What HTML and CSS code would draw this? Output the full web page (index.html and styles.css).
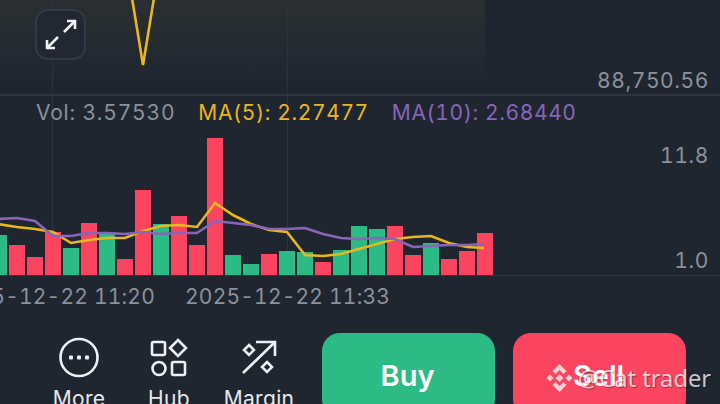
FILE: index.html
```html
<!DOCTYPE html>
<html lang="en">
<head>
    <meta charset="UTF-8">
    <meta name="viewport" content="width=device-width, initial-scale=1.0">
    <title>Chart</title>
    <link rel="stylesheet" href="styles.css">
</head>
<body>
    <div class="screen">
        <div class="price-glow"></div>
        <div class="grid-line grid-line-a"></div>
        <div class="grid-line grid-line-b"></div>

        <div class="price-pane">
            <svg class="price-line" width="40" height="70" viewBox="0 0 40 70">
                <path d="M11 -2 L22 65 L33 -2"/>
            </svg>
            <button class="expand-btn">
                <svg width="34" height="34" viewBox="0 0 34 34">
                    <path d="M2.500 30.500 L14 19 M3 31 V22 M2 30 H11 M31.500 2.500 L20 14 M31 2 V11 M32 3 H23"/>
                </svg>
            </button>
            <span class="price-label">88,750.56</span>
        </div>

        <div class="vol-pane">
            <div class="legend">
                <span class="legend-vol">Vol: 3.57530</span>
                <span class="legend-ma5">MA(5): 2.27477</span>
                <span class="legend-ma10">MA(10): 2.68440</span>
            </div>
            <span class="axis-label axis-top">11.8</span>
            <span class="axis-label axis-bottom">1.0</span>
            <svg class="vol-chart" width="720" height="180" viewBox="0 95 720 180">
                <g class="bars-green">
                    <rect x="-9" y="235" width="16" height="40"/>
                    <rect x="63" y="248" width="16" height="27"/>
                    <rect x="99" y="233" width="16" height="42"/>
                    <rect x="153" y="224" width="16" height="51"/>
                    <rect x="225" y="255" width="16" height="20"/>
                    <rect x="243" y="264" width="16" height="11"/>
                    <rect x="279" y="251" width="16" height="24"/>
                    <rect x="297" y="252" width="16" height="23"/>
                    <rect x="333" y="250" width="16" height="25"/>
                    <rect x="351" y="226" width="16" height="49"/>
                    <rect x="369" y="229" width="16" height="46"/>
                    <rect x="423" y="243" width="16" height="32"/>
                </g>
                <g class="bars-red">
                    <rect x="9" y="245" width="16" height="30"/>
                    <rect x="27" y="257" width="16" height="18"/>
                    <rect x="45" y="232" width="16" height="43"/>
                    <rect x="81" y="223" width="16" height="52"/>
                    <rect x="117" y="259" width="16" height="16"/>
                    <rect x="135" y="190" width="16" height="85"/>
                    <rect x="171" y="216" width="16" height="59"/>
                    <rect x="189" y="245" width="16" height="30"/>
                    <rect x="207" y="138" width="16" height="137"/>
                    <rect x="261" y="254" width="16" height="21"/>
                    <rect x="315" y="262" width="16" height="13"/>
                    <rect x="387" y="226" width="16" height="49"/>
                    <rect x="405" y="255" width="16" height="20"/>
                    <rect x="441" y="259" width="16" height="16"/>
                    <rect x="459" y="251" width="16" height="24"/>
                    <rect x="477" y="233" width="16" height="42"/>
                </g>
                <polyline class="ma5" points="-2,224 17,227 35,229 53,232 71,243 89,240 107,238 125,238 143,231 161,226 179,225 197,227 215,203 233,215 251,224 269,230 287,232 305,255 323,256 341,254 359,249 377,244 395,239 413,237 431,236 449,243 467,247 484,248"/>
                <polyline class="ma10" points="-2,219 17,218 35,221 53,236 71,236 89,233 107,233 125,234 143,232 161,234 179,233 197,233 215,221 233,223 251,225 269,229 287,229 305,228 323,234 341,238 359,239 377,238 395,239 413,247 431,246 449,245 467,245 484,244"/>
            </svg>
        </div>

        <div class="time-axis">
            <span class="time-a">2025-12-22 11:20</span>
            <span class="time-b">2025-12-22 11:33</span>
        </div>

        <div class="toolbar">
            <div class="tool tool-more">
                <svg width="44" height="44" viewBox="0 0 44 44">
                    <circle cx="22" cy="21.500" r="18.500"/>
                    <rect class="dot" x="12" y="19.500" width="4" height="4" rx="1"/>
                    <rect class="dot" x="20" y="19.500" width="4" height="4" rx="1"/>
                    <rect class="dot" x="28" y="19.500" width="4" height="4" rx="1"/>
                </svg>
                <span>More</span>
            </div>
            <div class="tool tool-hub">
                <svg width="44" height="44" viewBox="0 0 44 44">
                    <rect x="5" y="6" width="13" height="13" rx="1.500"/>
                    <path d="M31 4 L39 12 L31 20 L23 12 Z"/>
                    <circle cx="12" cy="32.500" r="6.500"/>
                    <rect x="25" y="26" width="13" height="13" rx="1.500"/>
                </svg>
                <span>Hub</span>
            </div>
            <div class="tool tool-margin">
                <svg width="44" height="44" viewBox="0 0 44 44">
                    <path d="M6 37 L38 6 M19 6 H38 V20"/>
                    <path d="M12 9 L17 14 L12 19 L7 14 Z"/>
                    <path d="M30 26 L35 31 L30 36 L25 31 Z"/>
                </svg>
                <span>Margin</span>
            </div>
            <button class="trade-btn buy">Buy</button>
            <button class="trade-btn sell">Sell</button>
        </div>

        <div class="watermark">
            <svg width="27" height="28" viewBox="0 0 27 28">
                <path d="M13.500 0 L20.500 7 L17.500 10 L13.500 6 L9.500 10 L6.500 7 Z M4 10.500 L7.500 14 L4 17.500 L0.500 14 Z M23 10.500 L26.500 14 L23 17.500 L19.500 14 Z M13.500 10 L17.500 14 L13.500 18 L9.500 14 Z M9.500 18 L13.500 22 L17.500 18 L20.500 21 L13.500 28 L6.500 21 Z"/>
            </svg>
            <span>@Cat trader</span>
        </div>
    </div>
</body>
</html>
```

FILE: styles.css
```css
* {
    box-sizing: border-box;
}

html, body {
    margin: 0;
    padding: 0;
}

body {
    background-color: #1f2630;
    font-family: "Inter", "Liberation Sans", sans-serif;
    font-variant-numeric: tabular-nums;
    letter-spacing: 0.6px;
    overflow: hidden;
}

.screen {
    position: relative;
    display: flex;
    flex-direction: column;
    width: 720px;
    height: 404px;
    overflow: hidden;
}

.price-glow {
    position: absolute;
    left: 0;
    top: 0;
    width: 485px;
    height: 85px;
    background: linear-gradient(#2b2f30, #1f2630);
}

.grid-line {
    position: absolute;
    top: 0;
    width: 1px;
    height: 275px;
    background-color: #2b323d;
}

.grid-line-a {
    left: 52px;
}

.grid-line-b {
    left: 287px;
}

/* price pane */
.price-pane {
    position: relative;
    flex: none;
    height: 96px;
    border-bottom: 2px solid #2e3540;
}

.price-line {
    position: absolute;
    left: 121px;
    top: 0;
}

.price-line path {
    fill: none;
    stroke: #e8b720;
    stroke-width: 2.600;
}

.expand-btn {
    position: absolute;
    left: 35px;
    top: 9px;
    width: 51px;
    height: 51px;
    padding: 8px;
    background-color: #222732;
    border: 2px solid #313946;
    border-radius: 13px;
}

.expand-btn svg {
    display: block;
    margin: -1px;
}

.expand-btn path {
    fill: none;
    stroke: #eef0f3;
    stroke-width: 2.600;
}

.price-label {
    position: absolute;
    right: 11px;
    top: 68px;
    color: #8b919b;
    font-size: 21px;
    line-height: 25px;
}

/* volume pane */
.vol-pane {
    position: relative;
    flex: none;
    height: 179px;
}

.legend {
    display: flex;
    gap: 23px;
    padding: 4px 0 0 36px;
    font-size: 21px;
    line-height: 25px;
}

.legend-vol {
    color: #8b919b;
    letter-spacing: 0.8px;
}

.legend-ma5 {
    color: #e8b720;
}

.legend-ma10 {
    color: #8a64b8;
}

.axis-label {
    position: absolute;
    right: 11px;
    color: #8b919b;
    font-size: 21px;
    line-height: 25px;
}

.axis-top {
    top: 47px;
}

.axis-bottom {
    top: 152px;
}

.vol-chart {
    position: absolute;
    left: 0;
    top: -1px;
    overflow: visible;
}

.bars-green rect {
    fill: #2dbb85;
}

.bars-red rect {
    fill: #fb4560;
}

.ma5, .ma10 {
    fill: none;
    stroke-width: 2.600;
}

.ma5 {
    stroke: #e8b720;
}

.ma10 {
    stroke: #8a64b8;
}

/* time axis */
.time-axis {
    position: relative;
    flex: none;
    height: 42px;
    border-top: 1px solid #2e3540;
    color: #8b919b;
    font-size: 21px;
    letter-spacing: 0.2px;
    line-height: 25px;
    white-space: nowrap;
}

.time-a, .time-b {
    position: absolute;
    top: 8px;
}

.time-a {
    right: 565px;
}

.time-b {
    left: 185px;
}

/* bottom toolbar */
.toolbar {
    display: flex;
    align-items: flex-start;
    flex: 1;
    padding: 16px 34px 0 0;
}

.tool {
    display: flex;
    flex-direction: column;
    align-items: center;
    flex: none;
    gap: 6px;
    padding-top: 3px;
    color: #e6e8eb;
    font-size: 21px;
    line-height: 26px;
    letter-spacing: 0.3px;
}

.tool svg {
    display: block;
    fill: none;
    stroke: #eef0f3;
    stroke-width: 2.600;
}

.tool .dot {
    fill: #eef0f3;
    stroke: none;
}

.tool-more {
    width: 72px;
    margin-left: 43px;
}

.tool-hub {
    width: 60px;
    margin-left: 24px;
}

.tool-margin {
    width: 80px;
    margin-left: 20px;
}

.trade-btn {
    flex: none;
    width: 173px;
    height: 84px;
    border: none;
    border-radius: 18px;
    color: #ffffff;
    font-family: inherit;
    font-size: 29px;
    font-weight: 600;
    letter-spacing: 0;
    padding: 0 2px 0 0;
}

.buy {
    margin-left: 23px;
    background-color: #2dbb85;
}

.sell {
    margin-left: 18px;
    background-color: #fb4560;
}

/* overlay watermark */
.watermark {
    position: absolute;
    left: 546px;
    top: 364px;
    display: flex;
    align-items: center;
    gap: 5px;
    color: rgba(255, 255, 255, 0.75);
    font-family: "Noto Sans", sans-serif;
    font-size: 23.700px;
    letter-spacing: 0;
    line-height: 28px;
    text-shadow: 1px 1px 1px rgba(0, 0, 0, 0.35);
}

.watermark svg {
    fill: rgba(255, 255, 255, 0.75);
}
```
